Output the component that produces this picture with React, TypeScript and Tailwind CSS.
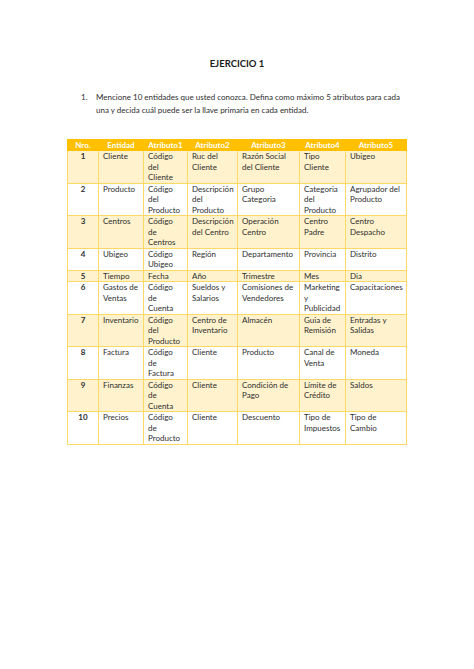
// Ejercicio 1 – tabla de entidades y atributos
type Row = { nro: string; cells: string[][] };

const headers = ["Nro.", "Entidad", "Atributo1", "Atributo2", "Atributo3", "Atributo4", "Atributo5"];

const rows: Row[] = [
  { nro: "1", cells: [["Cliente"], ["Código", "del", "Cliente"], ["Ruc del", "Cliente"], ["Razón Social", "del Cliente"], ["Tipo", "Cliente"], ["Ubigeo"]] },
  { nro: "2", cells: [["Producto"], ["Código", "del", "Producto"], ["Descripción", "del", "Producto"], ["Grupo", "Categoria"], ["Categoria", "del", "Producto"], ["Agrupador del", "Producto"]] },
  { nro: "3", cells: [["Centros"], ["Código", "de", "Centros"], ["Descripción", "del Centro"], ["Operación", "Centro"], ["Centro", "Padre"], ["Centro", "Despacho"]] },
  { nro: "4", cells: [["Ubigeo"], ["Código", "Ubigeo"], ["Región"], ["Departamento"], ["Provincia"], ["Distrito"]] },
  { nro: "5", cells: [["Tiempo"], ["Fecha"], ["Año"], ["Trimestre"], ["Mes"], ["Dia"]] },
  { nro: "6", cells: [["Gastos de", "Ventas"], ["Código", "de", "Cuenta"], ["Sueldos y", "Salarios"], ["Comisiones de", "Vendedores"], ["Marketing", "y", "Publicidad"], ["Capacitaciones"]] },
  { nro: "7", cells: [["Inventario"], ["Código", "del", "Producto"], ["Centro de", "Inventario"], ["Almacén"], ["Guia de", "Remisión"], ["Entradas y", "Salidas"]] },
  { nro: "8", cells: [["Factura"], ["Código", "de", "Factura"], ["Cliente"], ["Producto"], ["Canal de", "Venta"], ["Moneda"]] },
  { nro: "9", cells: [["Finanzas"], ["Código", "de", "Cuenta"], ["Cliente"], ["Condición de", "Pago"], ["Límite de", "Crédito"], ["Saldos"]] },
  { nro: "10", cells: [["Precios"], ["Código", "de", "Producto"], ["Cliente"], ["Descuento"], ["Tipo de", "Impuestos"], ["Tipo de", "Cambio"]] },
];

export default function App() {
  return (
    <div className="w-[474px] h-[669px] bg-white font-[Lato,sans-serif] text-[#2e2e2e] overflow-hidden">
      <h1 className="pt-[58px] text-center text-[9.5px] font-bold leading-[12px] text-[#1a1a1a]">EJERCICIO 1</h1>

      <div className="mt-[21px] flex text-[8px] leading-[13px]">
        <span className="w-[96px] pl-[81px]">1.</span>
        <p>
          <span className="block whitespace-nowrap">Mencione 10 entidades que usted conozca. Defina como máximo 5 atributos para cada</span>
          <span className="block whitespace-nowrap">una y decida cuál puede ser la llave primaria en cada entidad.</span>
        </p>
      </div>

      <table className="ml-[67px] mt-[22px] w-[339px] table-fixed border-collapse text-[8px] leading-[10.5px]">
        <colgroup>
          <col className="w-[31px]" />
          <col className="w-[45px]" />
          <col className="w-[44px]" />
          <col className="w-[50px]" />
          <col className="w-[62px]" />
          <col className="w-[46px]" />
          <col className="w-[61px]" />
        </colgroup>
        <thead>
          <tr className="bg-[#ffc000] text-white">
            {headers.map((h) => (
              <th key={h} className="border border-[#ffc000] py-0 text-center font-bold leading-[10px]">
                {h}
              </th>
            ))}
          </tr>
        </thead>
        <tbody>
          {rows.map((r, i) => (
            <tr key={r.nro} className={i % 2 === 0 ? "bg-[#fff2cc]" : "bg-white"}>
              <td className="border border-[#ffd966] px-[4px] py-0 align-top text-center font-bold">{r.nro}</td>
              {r.cells.map((lines, j) => (
                <td key={j} className="border border-[#ffd966] px-[4px] py-0 align-top">
                  {lines.map((l) => (
                    <span key={l} className="block whitespace-nowrap">
                      {l}
                    </span>
                  ))}
                </td>
              ))}
            </tr>
          ))}
        </tbody>
      </table>
    </div>
  );
}
